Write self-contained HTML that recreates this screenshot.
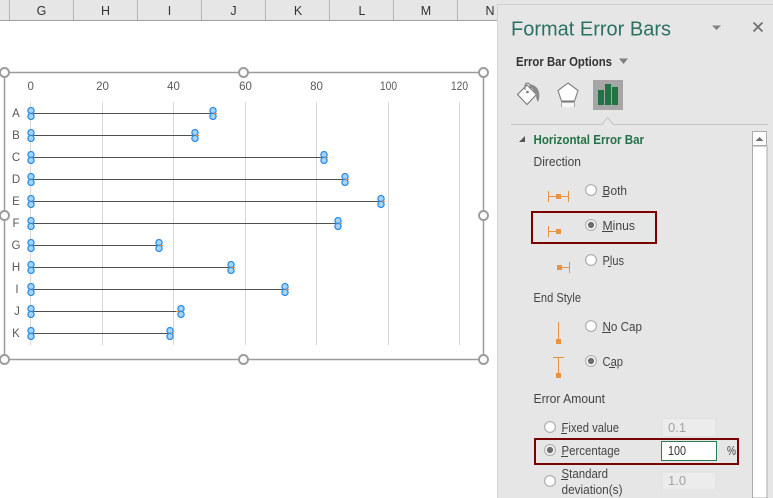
<!DOCTYPE html>
<html><head><meta charset="utf-8"><title>Format Error Bars</title>
<style>
html,body{margin:0;padding:0;background:#fff;width:773px;height:498px;overflow:hidden}
svg{display:block}
text{font-family:"Liberation Sans",sans-serif;font-size:13px;fill:#444}
.h{font-size:12.5px;fill:#333;text-anchor:middle}
.a{font-size:11.5px;fill:#595959;text-anchor:middle}
.c{font-size:11.5px;fill:#595959;text-anchor:middle}
.g{font-weight:bold;fill:#217346}
</style></head><body>
<svg width="773" height="498" viewBox="0 0 773 498" xmlns="http://www.w3.org/2000/svg">
<defs>
<g id="m"><circle cx="0" cy="-2.9" r="3.1" fill="#a4d4f7" stroke="#2e8de4" stroke-width="1.3"/><circle cx="0" cy="2.9" r="3.1" fill="#a4d4f7" stroke="#2e8de4" stroke-width="1.3"/></g>
</defs>
<!-- column header -->
<rect x="0" y="0" width="773" height="20" fill="#e6e6e6"/>
<rect x="0" y="20" width="497" height="1" fill="#9e9e9e"/>
<g fill="#b4b4b4"><rect x="9" y="0" width="1" height="20"/><rect x="73" y="0" width="1" height="20"/><rect x="137" y="0" width="1" height="20"/><rect x="201" y="0" width="1" height="20"/><rect x="265" y="0" width="1" height="20"/><rect x="329" y="0" width="1" height="20"/><rect x="393" y="0" width="1" height="20"/><rect x="457" y="0" width="1" height="20"/></g>
<text class="h" x="41.5" y="15">G</text><text class="h" x="105.5" y="15">H</text><text class="h" x="169.5" y="15">I</text><text class="h" x="233.5" y="15">J</text><text class="h" x="298" y="15">K</text><text class="h" x="362" y="15">L</text><text class="h" x="426" y="15">M</text><text class="h" x="490" y="15">N</text>

<!-- chart frame -->
<rect x="4.5" y="72.5" width="479" height="287" fill="#fff" stroke="#9b9b9b" stroke-width="1.5"/>
<g fill="#d8d8d8"><rect x="30" y="102" width="1" height="243"/><rect x="102" y="102" width="1" height="243"/><rect x="173" y="102" width="1" height="243"/><rect x="245" y="102" width="1" height="243"/><rect x="316" y="102" width="1" height="243"/><rect x="388" y="102" width="1" height="243"/><rect x="459" y="102" width="1" height="243"/></g>
<text class="a" x="30.7" y="90">0</text><text class="a" x="102.5" y="90">20</text><text class="a" x="173.5" y="90">40</text><text class="a" x="245.5" y="90">60</text><text class="a" x="316.5" y="90">80</text><text class="a" x="388.5" y="90" textLength="17" lengthAdjust="spacingAndGlyphs">100</text><text class="a" x="459.5" y="90" textLength="17" lengthAdjust="spacingAndGlyphs">120</text>
<text class="c" x="16" y="117">A</text><text class="c" x="16" y="139">B</text><text class="c" x="16" y="161">C</text><text class="c" x="16" y="183">D</text><text class="c" x="16" y="205">E</text><text class="c" x="16" y="227">F</text><text class="c" x="16" y="249">G</text><text class="c" x="16" y="271">H</text><text class="c" x="17" y="293">I</text><text class="c" x="17" y="315">J</text><text class="c" x="16" y="337">K</text>
<g stroke="#505050" stroke-width="1"><path d="M31 113.5H213M31 135.5H195M31 157.5H324M31 179.5H345M31 201.5H381M31 223.5H338M31 245.5H159M31 267.5H231M31 289.5H285M31 311.5H181M31 333.5H170"/></g>
<use href="#m" x="31" y="113.5"/><use href="#m" x="213" y="113.5"/>
<use href="#m" x="31" y="135.5"/><use href="#m" x="195" y="135.5"/>
<use href="#m" x="31" y="157.5"/><use href="#m" x="324" y="157.5"/>
<use href="#m" x="31" y="179.5"/><use href="#m" x="345" y="179.5"/>
<use href="#m" x="31" y="201.5"/><use href="#m" x="381" y="201.5"/>
<use href="#m" x="31" y="223.5"/><use href="#m" x="338" y="223.5"/>
<use href="#m" x="31" y="245.5"/><use href="#m" x="159" y="245.5"/>
<use href="#m" x="31" y="267.5"/><use href="#m" x="231" y="267.5"/>
<use href="#m" x="31" y="289.5"/><use href="#m" x="285" y="289.5"/>
<use href="#m" x="31" y="311.5"/><use href="#m" x="181" y="311.5"/>
<use href="#m" x="31" y="333.5"/><use href="#m" x="170" y="333.5"/>
<g stroke="#e8853a" stroke-width="1"><path d="M214 113.500h3M196 135.500h3M325 157.500h3M346 179.500h3M382 201.500h3M339 223.500h3M160 245.500h3M232 267.500h3M286 289.500h3M176 311.500h3M171 333.500h3"/></g>
<g fill="#fff" stroke="#9b9b9b" stroke-width="1.900"><circle cx="4.500" cy="72.500" r="4.500"/><circle cx="243.500" cy="72.500" r="4.500"/><circle cx="483.500" cy="72.500" r="4.500"/><circle cx="4.500" cy="215.500" r="4.500"/><circle cx="483.500" cy="215.500" r="4.500"/><circle cx="4.500" cy="359.500" r="4.500"/><circle cx="243.500" cy="359.500" r="4.500"/><circle cx="483.500" cy="359.500" r="4.500"/></g>

<!-- panel -->
<rect x="497" y="4" width="276" height="494" fill="#e6e6e6"/>
<rect x="497" y="4" width="276" height="1" fill="#cfcfcf"/>
<rect x="497" y="4" width="1" height="494" fill="#d4d4d4"/>
<text x="511" y="35.500" textLength="160" lengthAdjust="spacingAndGlyphs" style="font-size:20.500px;fill:#2a7163">Format Error Bars</text>
<path d="M712 25.500h9l-4.500 4.500z" fill="#808080"/>
<path d="M753.500 22.500l9 9M762.500 22.500l-9 9" stroke="#707070" stroke-width="1.800" fill="none"/>
<text x="516" y="66" textLength="96" lengthAdjust="spacingAndGlyphs" style="font-weight:bold;fill:#333">Error Bar Options</text>
<path d="M619 58.500h9l-4.500 5.500z" fill="#808080"/>

<!-- tab icons -->
<path d="M517.500 94.500L527 85l9.500 9.500L527 104.500z" fill="#fff" stroke="#777" stroke-width="1.100"/>
<path d="M525 90v-4.500q.5-2.500 2.500-2.500t2.500 2.500l1 3" fill="none" stroke="#777" stroke-width="1"/>
<circle cx="527.500" cy="92" r="1.300" fill="#777"/>
<path d="M529 84q8 1 10 8q1 6-1 10l-1.500-3q-.5-5-2-7z" fill="#8a8a8a"/>
<path d="M568 83l10 7.500-3.800 11.500h-12.400L558 90.500z" fill="#fff" stroke="#7f7f7f" stroke-width="1.100"/>
<rect x="562" y="100.500" width="12" height="2" fill="#7a7a7a"/>
<rect x="561" y="103" width="14" height="4" fill="#f7f7f7"/>
<path d="M561.500 103v4M574.500 103v4" stroke="#a8a8a8" stroke-width="1"/>
<rect x="593" y="80" width="30" height="30" fill="#a6a6a6"/>
<g fill="#217346"><rect x="598" y="90" width="6" height="15"/><rect x="605" y="84" width="6" height="21"/><rect x="612" y="87" width="6" height="18"/></g>
<path d="M511 124.500H602l5.500-7 6 7H768" fill="none" stroke="#c4c4c4" stroke-width="1"/>

<!-- scrollbar -->
<rect x="752.500" y="146" width="14.500" height="352" fill="#fff" stroke="#ababab" stroke-width="1"/>
<rect x="752.500" y="131.500" width="14" height="14" fill="#fff" stroke="#ababab" stroke-width="1"/>
<path d="M755.500 141l4-4 4 4z" fill="#707070"/>

<!-- section -->
<path d="M519 142l6-6v6z" fill="#555"/>
<text class="g" x="533.500" y="144" textLength="110.500" lengthAdjust="spacingAndGlyphs">Horizontal Error Bar</text>
<text x="533.500" y="166" textLength="47.500" lengthAdjust="spacingAndGlyphs">Direction</text>

<!-- direction icons -->
<g stroke="#e8933f" stroke-width="1" fill="none">
<path d="M548.500 191v11M568.500 191v11M548.500 196.500h20"/>
<path d="M548.500 226v11M548.500 231.500h8"/>
<path d="M569.500 262v11M562 267.500h7.500"/>
<path d="M558.500 322v18"/>
<path d="M553 357.500h11M558.500 357.500v16"/>
</g>
<g fill="#e8933f"><rect x="556" y="194" width="5" height="5"/><rect x="556" y="229" width="5" height="5"/><rect x="557" y="265" width="5" height="5"/><rect x="556" y="339" width="5" height="5"/><rect x="556" y="373" width="5" height="5"/></g>

<!-- radios -->
<g fill="#fff" stroke="#b2b2b2" stroke-width="1.300"><circle cx="591" cy="190" r="5.400"/><circle cx="591" cy="225" r="5.400"/><circle cx="591" cy="260" r="5.400"/><circle cx="591" cy="326" r="5.400"/><circle cx="591" cy="361" r="5.400"/><circle cx="550" cy="427" r="5.400"/><circle cx="550" cy="450" r="5.400"/><circle cx="550" cy="481" r="5.400"/></g>
<g fill="#6e6e6e"><circle cx="591" cy="225" r="3.200"/><circle cx="591" cy="361" r="3.200"/><circle cx="550" cy="450" r="3.200"/></g>

<text x="602.500" y="195" textLength="24.500" lengthAdjust="spacingAndGlyphs">Both</text>
<text x="602.500" y="230" textLength="32.500" lengthAdjust="spacingAndGlyphs">Minus</text>
<text x="602.500" y="265" textLength="21.500" lengthAdjust="spacingAndGlyphs">Plus</text>
<text x="533.500" y="302" textLength="47.500" lengthAdjust="spacingAndGlyphs">End Style</text>
<text x="602.500" y="331" textLength="39.500" lengthAdjust="spacingAndGlyphs">No Cap</text>
<text x="602.500" y="366" textLength="20.500" lengthAdjust="spacingAndGlyphs">Cap</text>
<text x="533.500" y="403" textLength="71.500" lengthAdjust="spacingAndGlyphs">Error Amount</text>
<text x="561.500" y="432" textLength="57.500" lengthAdjust="spacingAndGlyphs">Fixed value</text>
<text x="561.500" y="455" textLength="58.500" lengthAdjust="spacingAndGlyphs">Percentage</text>
<text x="561.500" y="478" textLength="46.500" lengthAdjust="spacingAndGlyphs">Standard</text>
<text x="561.500" y="494" textLength="61" lengthAdjust="spacingAndGlyphs">deviation(s)</text>
<g fill="#444"><rect x="602" y="196" width="7" height="1"/><rect x="602" y="231" width="11" height="1"/><rect x="608" y="266" width="3" height="1"/><rect x="602" y="332" width="9" height="1"/><rect x="609" y="367" width="6" height="1"/><rect x="561" y="433" width="6" height="1"/><rect x="561" y="456" width="7" height="1"/><rect x="561" y="479" width="7" height="1"/></g>

<!-- inputs -->
<rect x="662" y="418.500" width="54" height="18" fill="#ececec" stroke="#e0e0e0"/>
<text x="668" y="432" style="fill:#a3a3a3">0.1</text>
<rect x="661.500" y="441.500" width="55" height="19" fill="#fff" stroke="#2f7a55" stroke-width="1"/>
<text x="668" y="455" textLength="18" lengthAdjust="spacingAndGlyphs" style="fill:#333">100</text>
<text x="727" y="455" textLength="9" lengthAdjust="spacingAndGlyphs" style="fill:#444">%</text>
<rect x="662" y="472" width="54" height="18" fill="#ececec" stroke="#e0e0e0"/>
<text x="668" y="485" style="fill:#a3a3a3">1.0</text>

<!-- annotations -->
<rect x="532" y="212" width="124" height="31" fill="none" stroke="#7a0000" stroke-width="2"/>
<rect x="535" y="439" width="203" height="25" fill="none" stroke="#7a0000" stroke-width="2"/>
</svg>
</body></html>
